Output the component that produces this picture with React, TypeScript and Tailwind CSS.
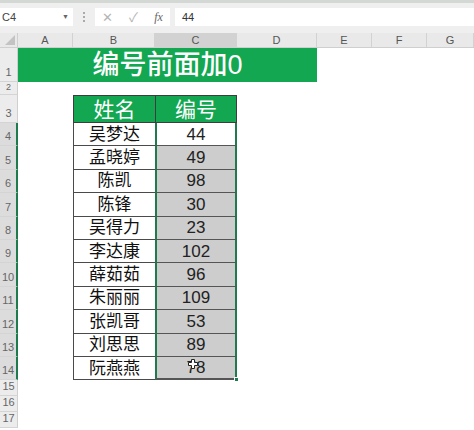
import React from 'react';

const COLS = [
  { key: 'A', w: 'w-[55px]' },
  { key: 'B', w: 'w-[82px]' },
  { key: 'C', w: 'w-[82px]' },
  { key: 'D', w: 'w-[80px]' },
  { key: 'E', w: 'w-[55px]' },
  { key: 'F', w: 'w-[55px]' },
  { key: 'G', w: 'flex-1' },
];

const DATA = [
  { name: '吴梦达', num: '44' },
  { name: '孟晓婷', num: '49' },
  { name: '陈凯', num: '98' },
  { name: '陈锋', num: '30' },
  { name: '吴得力', num: '23' },
  { name: '李达康', num: '102' },
  { name: '薛茹茹', num: '96' },
  { name: '朱丽丽', num: '109' },
  { name: '张凯哥', num: '53' },
  { name: '刘思思', num: '89' },
  { name: '阮燕燕', num: '78' },
];

const RowHead = ({ label, active = false, small = false }: { label: string; active?: boolean; small?: boolean }) => (
  <div
    className={`w-[18px] shrink-0 h-full overflow-hidden flex justify-center leading-none text-[#666] border-b border-[#d4d4d4] ${
      small ? 'items-start text-[9px] pt-[1px]' : 'items-end pb-[3px] text-[11px]'
    } ${active ? 'bg-[#dcdcdc] border-r-2 border-r-[#1f7a4d]' : 'bg-[#ececec] border-r border-r-[#cfcfcf]'}`}
  >
    <span>{label}</span>
  </div>
);

const FillCursor = () => (
  <svg className="absolute left-[31px] top-[2px]" width="10" height="10" viewBox="0 0 10 10">
    <path d="M3.5 0.5h3v3h3v3h-3v3h-3v-3h-3v-3h3z" fill="#fff" stroke="#222" strokeWidth="1" />
  </svg>
);

export default function App() {
  return (
    <div className="w-[474px] h-[430px] overflow-hidden bg-white font-['Liberation_Sans','Noto_Sans_CJK_SC',sans-serif]">
      {/* formula bar */}
      <div className="h-[3px] bg-[#d3d8d5]" />
      <div className="h-[30px] bg-[#efefef] flex items-start pt-[5px]">
        <div className="w-[73px] h-[18px] bg-white flex items-center justify-between pl-[2px] pr-[4px] text-[11px] text-[#444]">
          <span>C4</span>
          <span className="text-[7px] text-[#666]">▼</span>
        </div>
        <div className="w-[22px] h-[18px] flex flex-col items-center justify-center gap-[2px]">
          <span className="w-[2px] h-[2px] bg-[#aaa]" />
          <span className="w-[2px] h-[2px] bg-[#aaa]" />
          <span className="w-[2px] h-[2px] bg-[#aaa]" />
        </div>
        <div className="w-[75px] h-[18px] bg-white flex items-center text-[#b5b5b5]">
          <span className="w-[25px] text-center text-[13px] leading-none">✕</span>
          <span className="w-[27px] text-center text-[13px] leading-none">✓</span>
          <span className="w-[23px] text-center text-[12px] leading-none italic text-[#666] font-['Liberation_Serif',serif]">fx</span>
        </div>
        <div className="ml-[5px] flex-1 h-[18px] bg-white flex items-center pl-[7px] text-[11px] text-[#333]">44</div>
      </div>

      {/* column headers */}
      <div className="h-[15px] flex bg-[#e9e9e9] border-b border-[#cfcfcf]">
        <div className="w-[18px] shrink-0 relative border-r border-[#cfcfcf]">
          <svg className="absolute right-[2px] bottom-[2px]" width="10" height="10" viewBox="0 0 10 10">
            <path d="M10 0V10H0z" fill="#c3c3c3" />
          </svg>
        </div>
        {COLS.map((c) => (
          <div
            key={c.key}
            className={`${c.w} shrink-0 flex items-center justify-center text-[11px] text-[#555] border-r border-[#d2d2d2] ${
              c.key === 'C' ? 'bg-[#d2d2d2]' : ''
            }`}
          >
            {c.key}
          </div>
        ))}
      </div>

      {/* row 1: title */}
      <div className="h-[34px] flex">
        <RowHead label="1" />
        <div className="w-[299px] bg-[#12a750] flex items-center justify-center text-white text-[27px] font-medium leading-none pt-[1px]">
          编号前面加0
        </div>
      </div>

      {/* row 2 */}
      <div className="h-[13px] flex">
        <RowHead label="2" small />
      </div>

      {/* row 3: table header */}
      <div className="h-[28px] flex">
        <RowHead label="3" />
        <div className="w-[55px]" />
        <div className="w-[82px] bg-[#12a750] border border-r-0 border-[#3d3d3d] flex items-center justify-center text-white text-[21px] leading-none">
          姓名
        </div>
        <div className="w-[82px] bg-[#12a750] border border-[#3d3d3d] flex items-center justify-center text-white text-[21px] leading-none">
          编号
        </div>
      </div>

      {/* data rows */}
      {DATA.map((d, i) => (
        <div key={d.name} className="h-[23.4px] flex">
          <RowHead label={String(i + 4)} active />
          <div className="w-[55px]" />
          <div className="w-[82px] border-l border-b border-[#4a4a4a] flex items-center justify-center text-[17px] leading-none text-[#111]">
            {d.name}
          </div>
          <div
            className={`relative w-[82px] border-x-2 border-x-[#1f7a4d] border-b border-b-[#555] flex items-center justify-center text-[17px] leading-none text-[#222] ${
              i === 0 ? 'bg-white' : 'bg-[#cdcdcd]'
            } ${i === DATA.length - 1 ? 'border-b-2 border-b-[#1f7a4d]' : ''}`}
          >
            {d.num}
            {i === DATA.length - 1 && (
              <>
                <FillCursor />
                <span className="absolute -right-[4px] -bottom-[4px] w-[5px] h-[5px] bg-[#1f7a4d] border border-white" />
              </>
            )}
          </div>
        </div>
      ))}

      {/* trailing rows */}
      {['15', '16', '17'].map((r) => (
        <div key={r} className="h-[16px] flex">
          <RowHead label={r} />
        </div>
      ))}
    </div>
  );
}
